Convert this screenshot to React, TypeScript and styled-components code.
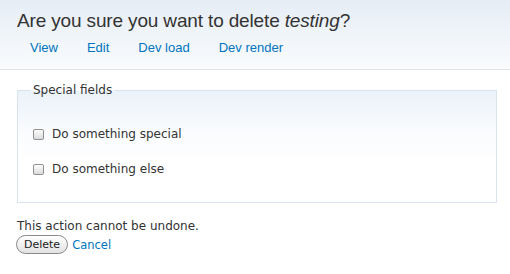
import styled, { createGlobalStyle } from "styled-components";

const GlobalStyle = createGlobalStyle`
  html, body {
    margin: 0;
    padding: 0;
    background: #fff;
  }
  body {
    font-family: "DejaVu Sans", Verdana, sans-serif;
    font-size: 12px;
    color: #333;
  }
`;

const Header = styled.div`
  background: linear-gradient(to bottom, #e5edf5 0%, #f2f6fa 60%, #f9fbfd 100%);
  border-bottom: 1px solid #e0e5ea;
  padding: 9px 17px 0;
  height: 60px;
`;

const Title = styled.h1`
  margin: 0;
  font-family: "Liberation Sans", Arial, sans-serif;
  font-weight: normal;
  font-size: 19px;
  letter-spacing: -0.15px;
  line-height: 24px;
  color: #333;
  em {
    font-style: italic;
  }
`;

const Tabs = styled.ul`
  display: flex;
  list-style: none;
  margin: 5px 0 0;
  padding: 0;
`;

const Tab = styled.li`
  a {
    display: block;
    padding: 0 16px 0 13px;
    font-family: "Liberation Sans", Arial, sans-serif;
    font-size: 13px;
    line-height: 20px;
    color: #0074bd;
    text-decoration: none;
  }
`;

const Content = styled.div`
  padding: 0 13px 0 17px;
`;

const Fieldset = styled.fieldset`
  margin: 13px 0 0;
  padding: 27px 13px 23px;
  border: 1px solid #d7e4ef;
  background: linear-gradient(to bottom, #ebf2f9 0%, #fbfcfe 45px, #fff 70px);
`;

const Legend = styled.legend`
  padding: 0 2px;
  font-size: 12px;
  color: #333;
`;

const CheckRow = styled.label`
  display: flex;
  align-items: center;
  gap: 8px;
  height: 20px;
  margin: 0 0 15px 2px;
  &:last-child {
    margin-bottom: 0;
  }
`;

const Box = styled.span`
  width: 11px;
  height: 11px;
  border: 1px solid #8f8f8f;
  border-radius: 2px;
  background: linear-gradient(to bottom, #fdfdfd, #dcdcdc);
  box-sizing: border-box;
`;

const Notice = styled.p`
  margin: 14px 0 0;
  line-height: 18px;
`;

const Actions = styled.div`
  display: flex;
  align-items: center;
  gap: 4px;
`;

const Button = styled.button`
  font-family: "DejaVu Sans", Verdana, sans-serif;
  font-size: 11px;
  color: #222;
  height: 19px;
  padding: 0 7px;
  margin-left: -1px;
  border: 1px solid #8a8a8a;
  border-radius: 10px;
  background: linear-gradient(to bottom, #ffffff, #e2e2e2);
`;

const Link = styled.a`
  font-size: 11.5px;
  color: #0074bd;
  text-decoration: none;
`;

export default function App() {
  const tabs = ["View", "Edit", "Dev load", "Dev render"];
  return (
    <>
      <GlobalStyle />
      <Header>
        <Title>
          Are you sure you want to delete <em>testing</em>?
        </Title>
        <Tabs>
          {tabs.map((t) => (
            <Tab key={t}>
              <a href="#">{t}</a>
            </Tab>
          ))}
        </Tabs>
      </Header>
      <Content>
        <Fieldset>
          <Legend>Special fields</Legend>
          <CheckRow>
            <Box />
            Do something special
          </CheckRow>
          <CheckRow>
            <Box />
            Do something else
          </CheckRow>
        </Fieldset>
        <Notice>This action cannot be undone.</Notice>
        <Actions>
          <Button>Delete</Button>
          <Link href="#">Cancel</Link>
        </Actions>
      </Content>
    </>
  );
}
